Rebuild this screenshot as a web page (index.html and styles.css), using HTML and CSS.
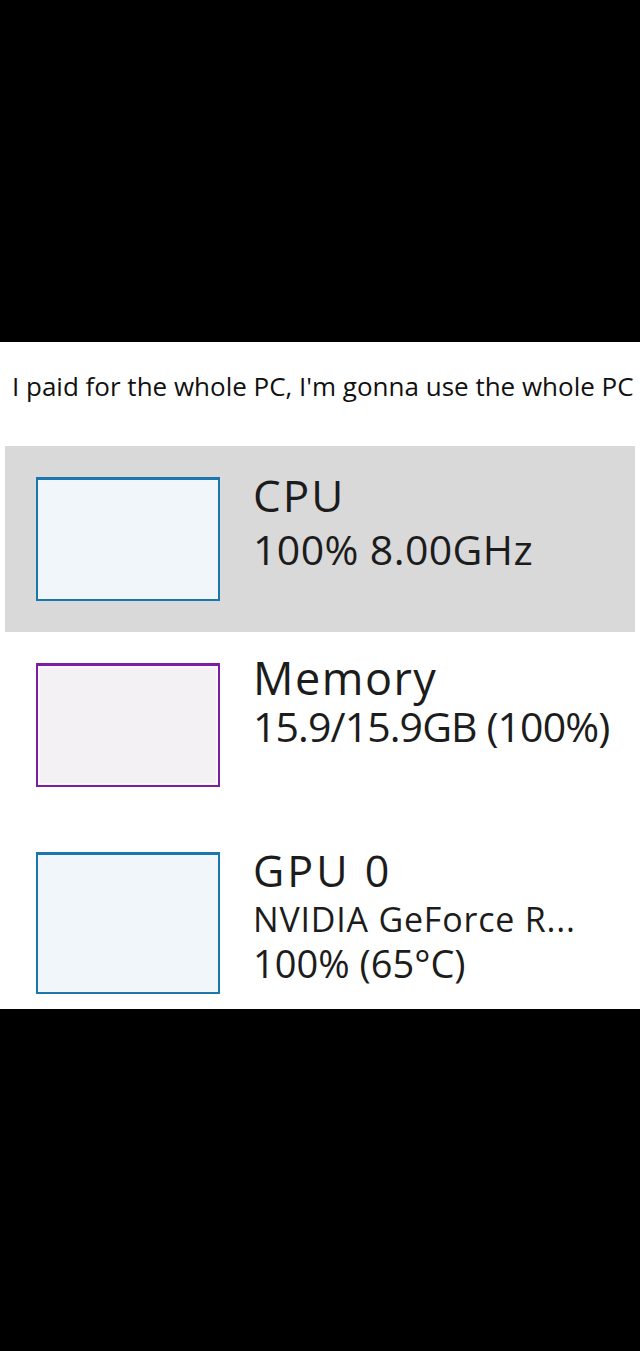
FILE: index.html
```html
<!DOCTYPE html>
<html>
<head>
<meta charset="utf-8">
<link rel="stylesheet" href="styles.css">
</head>
<body>
<div class="card">
  <p class="caption">I paid for the whole PC, I'm gonna use the whole PC</p>
  <div class="row row-cpu selected">
    <div class="graph graph-blue"></div>
    <div class="info">
      <div class="cpu-t">CPU</div>
      <div class="cpu-v">100% 8.00GHz</div>
    </div>
  </div>
  <div class="row row-mem">
    <div class="graph graph-purple"></div>
    <div class="info">
      <div class="mem-t">Memory</div>
      <div class="mem-v">15.9/15.9GB (100%)</div>
    </div>
  </div>
  <div class="row row-gpu">
    <div class="graph graph-blue graph-tall"></div>
    <div class="info">
      <div class="gpu-t">GPU 0</div>
      <div class="gpu-n">NVIDIA GeForce R...</div>
      <div class="gpu-v">100% (65°C)</div>
    </div>
  </div>
</div>
</body>
</html>
```

FILE: styles.css
```css
html, body {
  margin: 0;
  padding: 0;
  background: #000;
}
body {
  width: 640px;
  height: 1351px;
  font-family: "Open Sans", "Noto Sans", sans-serif;
  color: #1c1c1c;
}
.card {
  margin-top: 342px;
  height: 667px;
  background: #fff;
  overflow: hidden;
}
.caption {
  margin: 0;
  padding: 27px 0 0 12px;
  height: 104px;
  box-sizing: border-box;
  font-size: 26px;
  line-height: 34px;
  color: #111;
  white-space: nowrap;
}
.row {
  display: flex;
  align-items: flex-start;
  gap: 33px;
  margin: 0 5px;
  padding: 31px 0 0 31px;
  box-sizing: border-box;
}
.row-cpu { height: 186px; }
.row-mem { height: 189px; }
.row-gpu { height: 188px; }
.selected { background: #d9d9d9; }
.graph {
  width: 184px;
  height: 124px;
  box-sizing: border-box;
  flex: none;
}
.graph-tall { height: 142px; }
.graph-blue {
  border: 2px solid #1a76ad;
  border-top-width: 3px;
  background: #f1f6fa;
}
.graph-purple {
  border: 2px solid #7d1ea0;
  border-top-width: 3px;
  background: #f3f1f3;
  box-shadow: inset 0 0 0 2px #fbf7fb;
}
.info {
  display: flex;
  flex-direction: column;
  white-space: nowrap;
}
.cpu-t {
  font-size: 44px;
  line-height: 54px;
  letter-spacing: 2px;
  margin-top: -9px;
}
.cpu-v {
  font-size: 41px;
  line-height: 54px;
  letter-spacing: 0.4px;
}
.mem-t {
  font-size: 45px;
  line-height: 54px;
  letter-spacing: 1.5px;
  margin-top: -12px;
}
.mem-v {
  font-size: 41px;
  line-height: 42px;
  letter-spacing: -0.9px;
}
.gpu-t {
  font-size: 43px;
  line-height: 50px;
  letter-spacing: 3px;
  margin-top: -6px;
}
.gpu-n {
  font-size: 34px;
  line-height: 46px;
  letter-spacing: 0.8px;
}
.gpu-v {
  font-size: 38px;
  line-height: 43px;
}
```
